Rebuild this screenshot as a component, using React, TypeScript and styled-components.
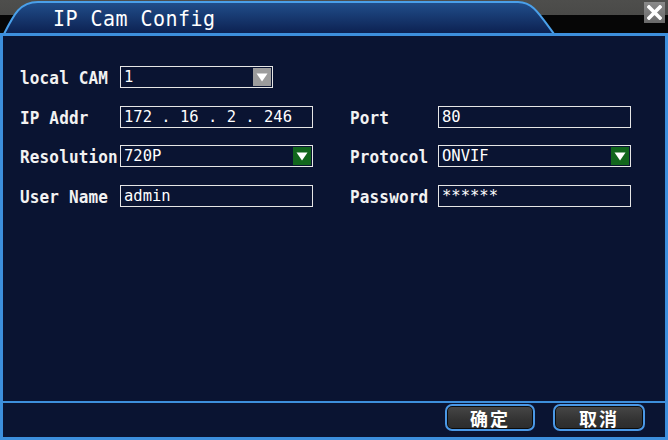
import styled, { createGlobalStyle } from "styled-components";

const GlobalStyle = createGlobalStyle`
  html, body {
    margin: 0;
    padding: 0;
    background: #000;
  }
`;

const BLUE = "#3d8fdc";
const MONO = `"DejaVu Sans Mono", "Liberation Mono", monospace`;

const Window = styled.div`
  width: 668px;
  height: 440px;
  display: flex;
  flex-direction: column;
  overflow: hidden;
`;

const TitleBar = styled.div`
  position: relative;
  height: 33px;
  flex: none;
  background: linear-gradient(#4e4e4c 0, #4a4a48 15px, #060606 15px);
`;

const TabShape = styled.svg`
  position: absolute;
  left: 0;
  top: 0;
`;

const Title = styled.div`
  position: relative;
  padding-left: 53px;
  padding-top: 7px;
  font-family: ${MONO};
  font-size: 20px;
  letter-spacing: 0.45px;
  color: #fff;
  line-height: 22px;
  transform: scaleY(1.05);
`;

const CloseButton = styled.div`
  position: absolute;
  right: 3px;
  top: 2px;
  width: 21px;
  height: 21px;
  display: flex;
  align-items: center;
  justify-content: center;
  background: linear-gradient(#8a8a8a, #6a6a6a);
`;

const Panel = styled.div`
  flex: 1;
  display: flex;
  flex-direction: column;
  background: #0a1432;
  border: 3px solid ${BLUE};
  box-sizing: border-box;
`;

const Form = styled.div`
  flex: 1;
  display: grid;
  grid-template-columns: 100px 193px 37px 88px 193px;
  grid-auto-rows: 22px;
  row-gap: 17.5px;
  padding: 30px 0 0 17px;
  align-content: start;
`;

const Label = styled.div`
  font-family: ${MONO};
  font-weight: bold;
  font-size: 16px;
  letter-spacing: 0.15px;
  color: #f2f2f2;
  display: flex;
  align-items: center;
  white-space: nowrap;
  transform: scaleY(1.12);
`;

const Field = styled.div<{ $width?: number }>`
  box-sizing: border-box;
  width: ${(p) => (p.$width ? `${p.$width}px` : "100%")};
  height: 22px;
  border: 1px solid #e6e6e6;
  display: flex;
  align-items: center;
  justify-content: space-between;
  padding-left: 3px;
  font-family: ${MONO};
  font-size: 15.5px;
  color: #fff;
  white-space: pre;
`;

const Arrow = styled.div<{ $color: string }>`
  width: 18px;
  height: 18px;
  margin-right: 1px;
  background: ${(p) => p.$color};
  display: flex;
  align-items: center;
  justify-content: center;
`;

const Footer = styled.div`
  height: 33px;
  flex: none;
  border-top: 2px solid ${BLUE};
  display: flex;
  justify-content: flex-end;
  align-items: flex-start;
  gap: 18px;
  padding: 1px 20px 0 0;
`;

const Button = styled.div<{ $width: number }>`
  box-sizing: border-box;
  width: ${(p) => p.$width}px;
  height: 27px;
  border: 2px solid #4a98e6;
  border-radius: 7px;
  box-shadow: inset 0 0 0 1px #0b0b0b;
  background: linear-gradient(#474747, #333 60%, #2c2c2c);
  display: flex;
  align-items: center;
  justify-content: center;
  font-family: "Noto Sans CJK SC", sans-serif;
  font-weight: bold;
  font-size: 18px;
  letter-spacing: 2px;
  color: #fff;
`;

const Triangle = () => (
  <svg width="12" height="9" viewBox="0 0 12 9">
    <path d="M0.5 0.5 L11.5 0.5 L6 8.5 Z" fill="#fff" />
  </svg>
);

const Select = ({ value, color, width }: { value: string; color: string; width?: number }) => (
  <Field $width={width}>
    {value}
    <Arrow $color={color}>
      <Triangle />
    </Arrow>
  </Field>
);

const Gap = styled.div``;

export default function App() {
  return (
    <>
      <GlobalStyle />
      <Window>
        <TitleBar>
          <TabShape width="560" height="33" viewBox="0 0 560 33">
            <defs>
              <linearGradient id="tabFill" x1="0" y1="0" x2="0" y2="1">
                <stop offset="0" stopColor="#214f8c" />
                <stop offset="1" stopColor="#0c2050" />
              </linearGradient>
            </defs>
            <path
              d="M4 34 C 14 14, 20 2, 38 2 L 518 2 C 532 2, 538 12, 554 34 Z"
              fill="url(#tabFill)"
              stroke="#4aa0ea"
              strokeWidth="2"
            />
          </TabShape>
          <Title>IP Cam Config</Title>
          <CloseButton>
            <svg width="15" height="15" viewBox="0 0 15 15">
              <path d="M2 2 L13 13 M13 2 L2 13" stroke="#fff" strokeWidth="3.6" strokeLinecap="square" />
            </svg>
          </CloseButton>
        </TitleBar>
        <Panel>
          <Form>
            <Label>local CAM</Label>
            <Select value="1" color="#9c9c9c" width={153} />
            <Gap />
            <Gap />
            <Gap />

            <Label>IP Addr</Label>
            <Field>172 . 16 . 2 . 246</Field>
            <Gap />
            <Label>Port</Label>
            <Field>80</Field>

            <Label>Resolution</Label>
            <Select value="720P" color="#11661c" />
            <Gap />
            <Label>Protocol</Label>
            <Select value="ONVIF" color="#11661c" />

            <Label>User Name</Label>
            <Field>admin</Field>
            <Gap />
            <Label>Password</Label>
            <Field>******</Field>
          </Form>
          <Footer>
            <Button $width={90}>确定</Button>
            <Button $width={92}>取消</Button>
          </Footer>
        </Panel>
      </Window>
    </>
  );
}
